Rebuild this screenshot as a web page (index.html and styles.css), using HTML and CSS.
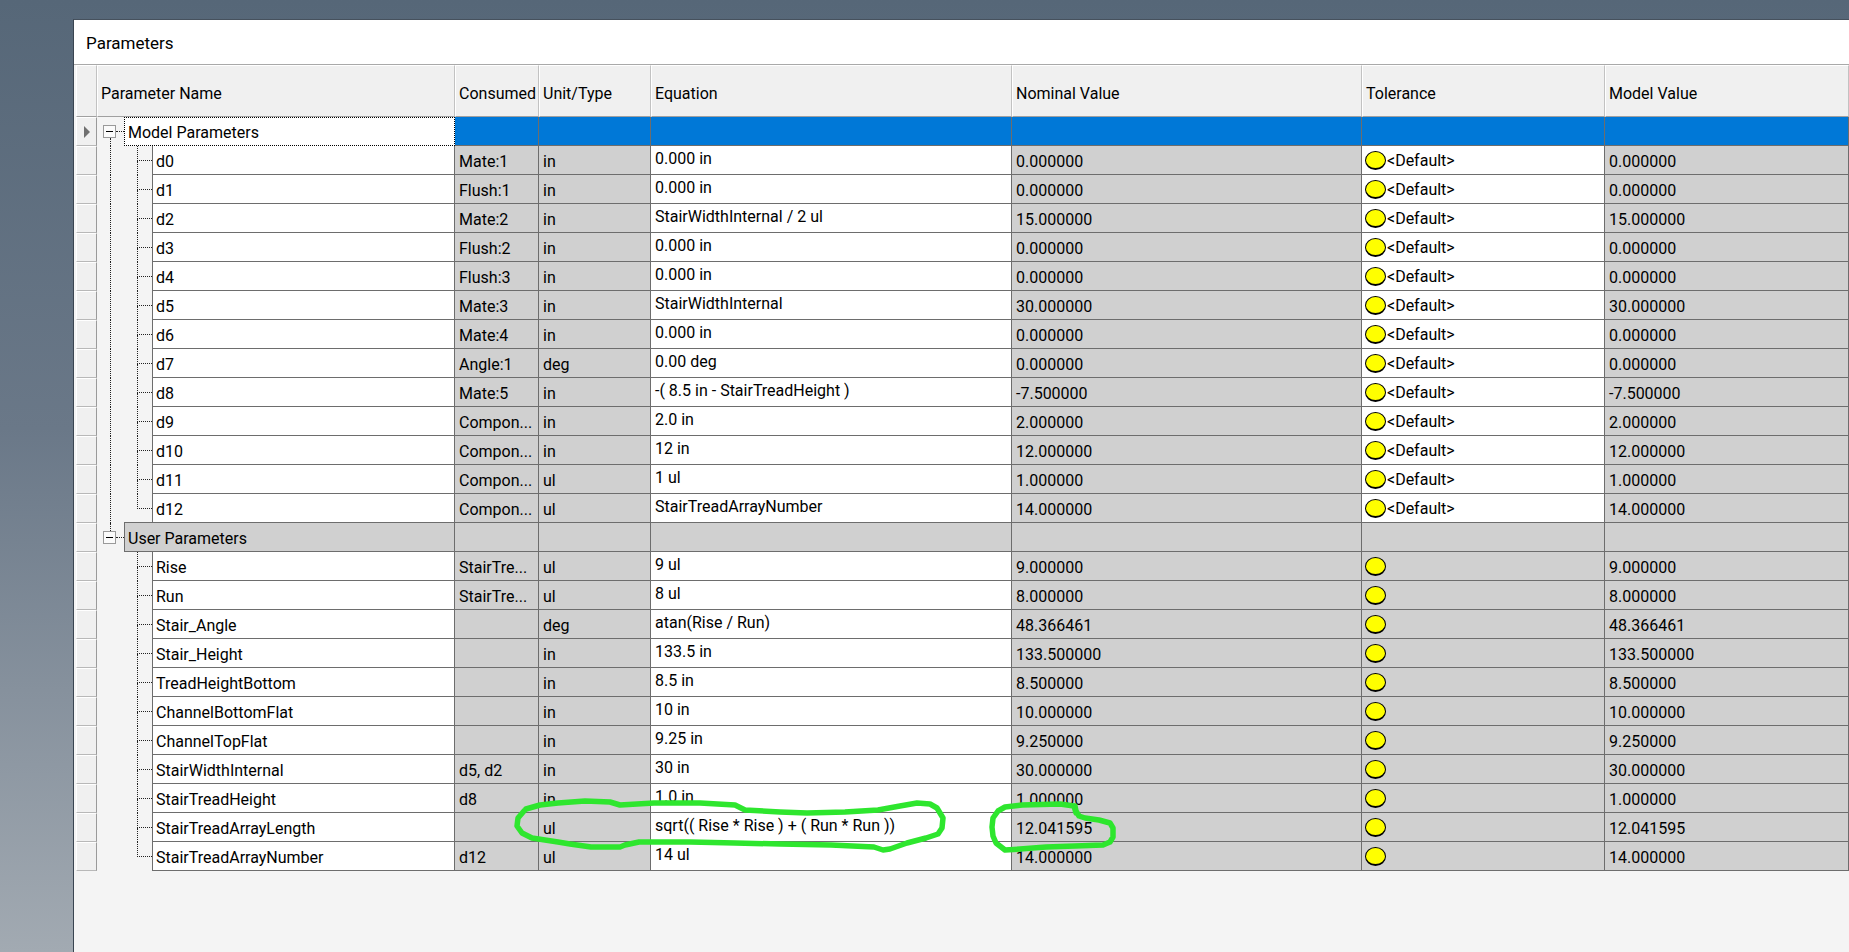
FILE: index.html
```html
<!DOCTYPE html>
<html>
<head>
<meta charset="utf-8">
<title>Parameters</title>
<link rel="stylesheet" href="styles.css">
</head>
<body>
<div class="desktop">
  <div class="window">
    <div class="titlebar">Parameters</div>
    <div class="grid">
      <div class="hdr">
        <div class="hc0"></div>
        <div class="hcell">Parameter Name</div>
        <div class="hcell">Consumed</div>
        <div class="hcell">Unit/Type</div>
        <div class="hcell">Equation</div>
        <div class="hcell">Nominal Value</div>
        <div class="hcell">Tolerance</div>
        <div class="hcell">Model Value</div>
      </div>

      <div class="row">
        <div class="rh cur"></div>
        <div class="nc"><div class="gut top"><div class="boxcol"><span class="seg"></span><span class="box"></span><span class="seg on"></span></div><span class="hcn"></span></div><div class="nm focus">Model Parameters</div></div>
        <div class="c blue"></div><div class="c blue"></div><div class="c blue"></div><div class="c blue"></div><div class="c blue"></div><div class="c blue"></div>
      </div>

      <div class="row">
        <div class="rh"></div>
        <div class="nc"><div class="gut"><span class="l1 on"></span><span class="l2"></span><span class="l3"><span class="t"></span><span class="b on"></span></span></div><div class="nm">d0</div></div>
        <div class="c g">Mate:1</div><div class="c g">in</div><div class="c eq">0.000 in</div><div class="c g">0.000000</div><div class="c tol"><span class="dot"></span>&lt;Default&gt;</div><div class="c g">0.000000</div>
      </div>
      <div class="row">
        <div class="rh"></div>
        <div class="nc"><div class="gut"><span class="l1 on"></span><span class="l2"></span><span class="l3"><span class="t"></span><span class="b on"></span></span></div><div class="nm">d1</div></div>
        <div class="c g">Flush:1</div><div class="c g">in</div><div class="c eq">0.000 in</div><div class="c g">0.000000</div><div class="c tol"><span class="dot"></span>&lt;Default&gt;</div><div class="c g">0.000000</div>
      </div>
      <div class="row">
        <div class="rh"></div>
        <div class="nc"><div class="gut"><span class="l1 on"></span><span class="l2"></span><span class="l3"><span class="t"></span><span class="b on"></span></span></div><div class="nm">d2</div></div>
        <div class="c g">Mate:2</div><div class="c g">in</div><div class="c eq">StairWidthInternal / 2 ul</div><div class="c g">15.000000</div><div class="c tol"><span class="dot"></span>&lt;Default&gt;</div><div class="c g">15.000000</div>
      </div>
      <div class="row">
        <div class="rh"></div>
        <div class="nc"><div class="gut"><span class="l1 on"></span><span class="l2"></span><span class="l3"><span class="t"></span><span class="b on"></span></span></div><div class="nm">d3</div></div>
        <div class="c g">Flush:2</div><div class="c g">in</div><div class="c eq">0.000 in</div><div class="c g">0.000000</div><div class="c tol"><span class="dot"></span>&lt;Default&gt;</div><div class="c g">0.000000</div>
      </div>
      <div class="row">
        <div class="rh"></div>
        <div class="nc"><div class="gut"><span class="l1 on"></span><span class="l2"></span><span class="l3"><span class="t"></span><span class="b on"></span></span></div><div class="nm">d4</div></div>
        <div class="c g">Flush:3</div><div class="c g">in</div><div class="c eq">0.000 in</div><div class="c g">0.000000</div><div class="c tol"><span class="dot"></span>&lt;Default&gt;</div><div class="c g">0.000000</div>
      </div>
      <div class="row">
        <div class="rh"></div>
        <div class="nc"><div class="gut"><span class="l1 on"></span><span class="l2"></span><span class="l3"><span class="t"></span><span class="b on"></span></span></div><div class="nm">d5</div></div>
        <div class="c g">Mate:3</div><div class="c g">in</div><div class="c eq">StairWidthInternal</div><div class="c g">30.000000</div><div class="c tol"><span class="dot"></span>&lt;Default&gt;</div><div class="c g">30.000000</div>
      </div>
      <div class="row">
        <div class="rh"></div>
        <div class="nc"><div class="gut"><span class="l1 on"></span><span class="l2"></span><span class="l3"><span class="t"></span><span class="b on"></span></span></div><div class="nm">d6</div></div>
        <div class="c g">Mate:4</div><div class="c g">in</div><div class="c eq">0.000 in</div><div class="c g">0.000000</div><div class="c tol"><span class="dot"></span>&lt;Default&gt;</div><div class="c g">0.000000</div>
      </div>
      <div class="row">
        <div class="rh"></div>
        <div class="nc"><div class="gut"><span class="l1 on"></span><span class="l2"></span><span class="l3"><span class="t"></span><span class="b on"></span></span></div><div class="nm">d7</div></div>
        <div class="c g">Angle:1</div><div class="c g">deg</div><div class="c eq">0.00 deg</div><div class="c g">0.000000</div><div class="c tol"><span class="dot"></span>&lt;Default&gt;</div><div class="c g">0.000000</div>
      </div>
      <div class="row">
        <div class="rh"></div>
        <div class="nc"><div class="gut"><span class="l1 on"></span><span class="l2"></span><span class="l3"><span class="t"></span><span class="b on"></span></span></div><div class="nm">d8</div></div>
        <div class="c g">Mate:5</div><div class="c g">in</div><div class="c eq">-( 8.5 in - StairTreadHeight )</div><div class="c g">-7.500000</div><div class="c tol"><span class="dot"></span>&lt;Default&gt;</div><div class="c g">-7.500000</div>
      </div>
      <div class="row">
        <div class="rh"></div>
        <div class="nc"><div class="gut"><span class="l1 on"></span><span class="l2"></span><span class="l3"><span class="t"></span><span class="b on"></span></span></div><div class="nm">d9</div></div>
        <div class="c g">Compon...</div><div class="c g">in</div><div class="c eq">2.0 in</div><div class="c g">2.000000</div><div class="c tol"><span class="dot"></span>&lt;Default&gt;</div><div class="c g">2.000000</div>
      </div>
      <div class="row">
        <div class="rh"></div>
        <div class="nc"><div class="gut"><span class="l1 on"></span><span class="l2"></span><span class="l3"><span class="t"></span><span class="b on"></span></span></div><div class="nm">d10</div></div>
        <div class="c g">Compon...</div><div class="c g">in</div><div class="c eq">12 in</div><div class="c g">12.000000</div><div class="c tol"><span class="dot"></span>&lt;Default&gt;</div><div class="c g">12.000000</div>
      </div>
      <div class="row">
        <div class="rh"></div>
        <div class="nc"><div class="gut"><span class="l1 on"></span><span class="l2"></span><span class="l3"><span class="t"></span><span class="b on"></span></span></div><div class="nm">d11</div></div>
        <div class="c g">Compon...</div><div class="c g">ul</div><div class="c eq">1 ul</div><div class="c g">1.000000</div><div class="c tol"><span class="dot"></span>&lt;Default&gt;</div><div class="c g">1.000000</div>
      </div>
      <div class="row">
        <div class="rh"></div>
        <div class="nc"><div class="gut"><span class="l1 on"></span><span class="l2"></span><span class="l3"><span class="t"></span><span class="b"></span></span></div><div class="nm">d12</div></div>
        <div class="c g">Compon...</div><div class="c g">ul</div><div class="c eq">StairTreadArrayNumber</div><div class="c g">14.000000</div><div class="c tol"><span class="dot"></span>&lt;Default&gt;</div><div class="c g">14.000000</div>
      </div>

      <div class="row">
        <div class="rh"></div>
        <div class="nc"><div class="gut top"><div class="boxcol"><span class="seg on"></span><span class="box"></span><span class="seg"></span></div><span class="hcn"></span></div><div class="nm grp">User Parameters</div></div>
        <div class="c g"></div><div class="c g"></div><div class="c g"></div><div class="c g"></div><div class="c g"></div><div class="c g"></div>
      </div>

      <div class="row">
        <div class="rh"></div>
        <div class="nc"><div class="gut"><span class="l1"></span><span class="l2"></span><span class="l3"><span class="t"></span><span class="b on"></span></span></div><div class="nm">Rise</div></div>
        <div class="c g">StairTre...</div><div class="c g">ul</div><div class="c eq">9 ul</div><div class="c g">9.000000</div><div class="c g tol"><span class="dot"></span></div><div class="c g">9.000000</div>
      </div>
      <div class="row">
        <div class="rh"></div>
        <div class="nc"><div class="gut"><span class="l1"></span><span class="l2"></span><span class="l3"><span class="t"></span><span class="b on"></span></span></div><div class="nm">Run</div></div>
        <div class="c g">StairTre...</div><div class="c g">ul</div><div class="c eq">8 ul</div><div class="c g">8.000000</div><div class="c g tol"><span class="dot"></span></div><div class="c g">8.000000</div>
      </div>
      <div class="row">
        <div class="rh"></div>
        <div class="nc"><div class="gut"><span class="l1"></span><span class="l2"></span><span class="l3"><span class="t"></span><span class="b on"></span></span></div><div class="nm">Stair_Angle</div></div>
        <div class="c g"></div><div class="c g">deg</div><div class="c eq">atan(Rise / Run)</div><div class="c g">48.366461</div><div class="c g tol"><span class="dot"></span></div><div class="c g">48.366461</div>
      </div>
      <div class="row">
        <div class="rh"></div>
        <div class="nc"><div class="gut"><span class="l1"></span><span class="l2"></span><span class="l3"><span class="t"></span><span class="b on"></span></span></div><div class="nm">Stair_Height</div></div>
        <div class="c g"></div><div class="c g">in</div><div class="c eq">133.5 in</div><div class="c g">133.500000</div><div class="c g tol"><span class="dot"></span></div><div class="c g">133.500000</div>
      </div>
      <div class="row">
        <div class="rh"></div>
        <div class="nc"><div class="gut"><span class="l1"></span><span class="l2"></span><span class="l3"><span class="t"></span><span class="b on"></span></span></div><div class="nm">TreadHeightBottom</div></div>
        <div class="c g"></div><div class="c g">in</div><div class="c eq">8.5 in</div><div class="c g">8.500000</div><div class="c g tol"><span class="dot"></span></div><div class="c g">8.500000</div>
      </div>
      <div class="row">
        <div class="rh"></div>
        <div class="nc"><div class="gut"><span class="l1"></span><span class="l2"></span><span class="l3"><span class="t"></span><span class="b on"></span></span></div><div class="nm">ChannelBottomFlat</div></div>
        <div class="c g"></div><div class="c g">in</div><div class="c eq">10 in</div><div class="c g">10.000000</div><div class="c g tol"><span class="dot"></span></div><div class="c g">10.000000</div>
      </div>
      <div class="row">
        <div class="rh"></div>
        <div class="nc"><div class="gut"><span class="l1"></span><span class="l2"></span><span class="l3"><span class="t"></span><span class="b on"></span></span></div><div class="nm">ChannelTopFlat</div></div>
        <div class="c g"></div><div class="c g">in</div><div class="c eq">9.25 in</div><div class="c g">9.250000</div><div class="c g tol"><span class="dot"></span></div><div class="c g">9.250000</div>
      </div>
      <div class="row">
        <div class="rh"></div>
        <div class="nc"><div class="gut"><span class="l1"></span><span class="l2"></span><span class="l3"><span class="t"></span><span class="b on"></span></span></div><div class="nm">StairWidthInternal</div></div>
        <div class="c g">d5, d2</div><div class="c g">in</div><div class="c eq">30 in</div><div class="c g">30.000000</div><div class="c g tol"><span class="dot"></span></div><div class="c g">30.000000</div>
      </div>
      <div class="row">
        <div class="rh"></div>
        <div class="nc"><div class="gut"><span class="l1"></span><span class="l2"></span><span class="l3"><span class="t"></span><span class="b on"></span></span></div><div class="nm">StairTreadHeight</div></div>
        <div class="c g">d8</div><div class="c g">in</div><div class="c eq">1.0 in</div><div class="c g">1.000000</div><div class="c g tol"><span class="dot"></span></div><div class="c g">1.000000</div>
      </div>
      <div class="row">
        <div class="rh"></div>
        <div class="nc"><div class="gut"><span class="l1"></span><span class="l2"></span><span class="l3"><span class="t"></span><span class="b on"></span></span></div><div class="nm">StairTreadArrayLength</div></div>
        <div class="c g"></div><div class="c g">ul</div><div class="c eq">sqrt(( Rise * Rise ) + ( Run * Run ))</div><div class="c g">12.041595</div><div class="c g tol"><span class="dot"></span></div><div class="c g">12.041595</div>
      </div>
      <div class="row">
        <div class="rh"></div>
        <div class="nc"><div class="gut"><span class="l1"></span><span class="l2"></span><span class="l3"><span class="t"></span><span class="b"></span></span></div><div class="nm">StairTreadArrayNumber</div></div>
        <div class="c g">d12</div><div class="c g">ul</div><div class="c eq">14 ul</div><div class="c g">14.000000</div><div class="c g tol"><span class="dot"></span></div><div class="c g">14.000000</div>
      </div>
    </div>
  </div>
</div>

<svg class="ink" width="1849" height="952" viewBox="0 0 1849 952">
  <polyline points="526,809 540,805 558,803 585,801 610,802 620,805 654,803 700,803 735,805 745,810 780,812 807,813 845,812 878,810 900,806 917,803 930,804 937,808 943,818 942,828 938,834 926,838 907,843 890,849 883,850 874,847 831,845 780,844 735,843 690,842 639,842 625,845 620,847 591,847 570,844 558,842 532,838 522,833 517,826 518,818 524,811"/>
  <polyline points="1076,813 1074,806 1060,804 1022,805 1005,807 998,811 993,818 992,827 993,836 996,843 1005,850 1020,849 1046,847 1075,846 1103,845 1110,842 1113,837 1113,828 1110,823 1099,820 1085,818 1079,816 1076,811 1075,806"/>
</svg>
</body>
</html>
```

FILE: styles.css
```css
html, body {
  margin: 0;
  padding: 0;
}

body {
  width: 1849px;
  height: 952px;
  overflow: hidden;
  position: relative;
  background: linear-gradient(180deg, #566778 0%, #6a7888 45%, #a2aab2 100%);
  font-family: Roboto, "Noto Sans", "DejaVu Sans", sans-serif;
  font-size: 16px;
  color: #000;
}

.desktop {
  height: 952px;
  box-sizing: border-box;
  padding: 19px 0 0 73px;
  display: flex;
}

.window {
  flex: 1;
  display: flex;
  flex-direction: column;
  background: #f4f4f4;
  border-left: 1px solid #3a4551;
  border-top: 1px solid #46515d;
}

.titlebar {
  height: 44px;
  box-sizing: border-box;
  background: #fff;
  border-bottom: 1px solid #a9a9a9;
  display: flex;
  align-items: center;
  padding: 2px 0 0 12px;
  font-size: 17px;
  height: 45px;
}

.grid {
  padding-left: 2px;
}

.hdr,
.row {
  display: grid;
  grid-template-columns: 21px 358px 84px 112px 361px 350px 243px 1fr;
}

.hdr {
  height: 52px;
}

.hc0,
.hcell {
  box-sizing: border-box;
  background: #f0f0f0;
  border-top: 1px solid #fff;
  border-left: 1px solid #fff;
  border-right: 1px solid #c2c2c2;
  border-bottom: 1px solid #a0a0a0;
}

.hcell {
  display: flex;
  align-items: center;
  padding: 4px 0 0 3px;
  white-space: nowrap;
  overflow: hidden;
}

.row {
  height: 29px;
}

.rh {
  box-sizing: border-box;
  background: #f0f0f0;
  border-top: 1px solid #fff;
  border-left: 1px solid #fff;
  border-right: 1px solid #9a9a9a;
  border-bottom: 1px solid #b8b8b8;
  display: flex;
  align-items: center;
  justify-content: center;
}

.rh.cur::before {
  content: "";
  width: 0;
  height: 0;
  border-left: 6px solid #707070;
  border-top: 6px solid transparent;
  border-bottom: 6px solid transparent;
  margin-left: 1px;
}

.c {
  box-sizing: border-box;
  border-right: 1px solid #6d6d6d;
  border-bottom: 1px solid #6d6d6d;
  padding: 2px 0 0 4px;
  display: flex;
  align-items: center;
  white-space: nowrap;
  overflow: hidden;
  background: #fff;
}

.c.g {
  background: #d0d0d0;
}

.c.blue {
  background: #0078d7;
}

.c.eq {
  padding-top: 0;
  padding-bottom: 4px;
}

.c.tol {
  padding-left: 3px;
  padding-top: 1px;
}

.dot {
  width: 21px;
  height: 19px;
  box-sizing: border-box;
  border: 1.5px solid #000;
  border-bottom-width: 2.5px;
  border-radius: 50%;
  background: #ffff00;
  margin-right: 1px;
  flex: none;
}

/* name column with tree gutter */
.nc {
  display: flex;
  min-width: 0;
}

.nm {
  flex: 1;
  min-width: 0;
  box-sizing: border-box;
  background: #fff;
  border-left: 1px solid #6d6d6d;
  border-right: 1px solid #6d6d6d;
  border-bottom: 1px solid #6d6d6d;
  padding: 2px 0 0 3px;
  display: flex;
  align-items: center;
  white-space: nowrap;
  overflow: hidden;
}

.nm.focus {
  border: 1px dotted #000;
}

.nm.grp {
  background: #d0d0d0;
  border-top: 1px solid #6d6d6d;
  margin-top: -1px;
}

.gut {
  width: 55px;
  flex: none;
  display: flex;
}

.gut.top {
  width: 27px;
  box-sizing: border-box;
  padding-left: 6px;
  align-items: center;
}

.boxcol {
  width: 13px;
  height: 29px;
  display: flex;
  flex-direction: column;
}

.seg {
  display: block;
  width: 8px;
  height: 8px;
  box-sizing: border-box;
}

.seg:last-child {
  flex: 1;
}

.seg.on {
  border-right: 1px dotted #222;
}

.box {
  display: flex;
  align-items: center;
  justify-content: center;
  width: 13px;
  height: 13px;
  box-sizing: border-box;
  border: 1px solid #9a9a9a;
  background: #fbfbfb;
}

.box::before {
  content: "";
  width: 7px;
  height: 1px;
  background: #000;
}

.hcn {
  display: block;
  width: 8px;
  height: 0;
  border-top: 1px dotted #222;
}

.l1 {
  display: block;
  width: 14px;
  box-sizing: border-box;
}

.l1.on {
  border-right: 1px dotted #222;
}

.l2 {
  display: block;
  width: 26px;
}

.l3 {
  width: 15px;
  display: flex;
  flex-direction: column;
}

.l3 .t {
  display: block;
  height: 15px;
  box-sizing: border-box;
  border-left: 1px dotted #222;
  border-bottom: 1px dotted #222;
}

.l3 .b {
  display: block;
  flex: 1;
  box-sizing: border-box;
}

.l3 .b.on {
  border-left: 1px dotted #222;
}

/* hand-drawn annotation */
.ink {
  position: absolute;
  left: 0;
  top: 0;
  pointer-events: none;
}

.ink polyline {
  fill: none;
  stroke: #2ee62e;
  stroke-width: 5.5;
  stroke-linecap: round;
  stroke-linejoin: round;
}
```
